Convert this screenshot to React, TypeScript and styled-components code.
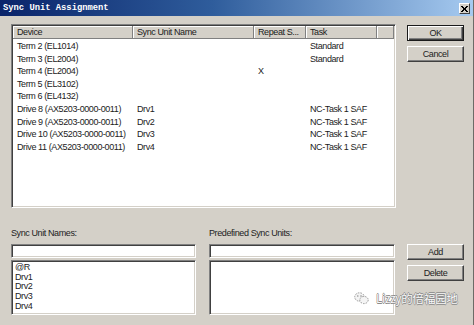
import React from 'react';
import styled, { createGlobalStyle } from 'styled-components';

const GlobalStyle = createGlobalStyle`
  html, body {
    margin: 0;
    padding: 0;
    background: #d4d0c8;
  }
  * {
    box-sizing: border-box;
  }
`;

const FACE = '#d4d0c8';

const Window = styled.div`
  position: relative;
  width: 474px;
  height: 325px;
  background: ${FACE};
  display: flex;
  flex-direction: column;
  font-family: 'Liberation Sans', Arial, sans-serif;
  font-size: 9px;
  letter-spacing: -0.4px;
  color: #1a1a1a;
  overflow: hidden;
  border-right: 1px solid #6d6b66;
`;

const TitleBar = styled.div`
  height: 16px;
  flex: none;
  display: flex;
  align-items: center;
  justify-content: space-between;
  padding: 0 3px 0 3px;
  background: linear-gradient(to right, #0a246a 0%, #2f5d9c 45%, #a6caf0 100%);
`;

const TitleText = styled.span`
  font-family: 'Liberation Mono', 'Courier New', monospace;
  font-weight: bold;
  font-size: 8.8px;
  letter-spacing: 0;
  color: #ffffff;
`;

const CloseButton = styled.div`
  width: 11px;
  height: 11px;
  margin-top: 1px;
  background: ${FACE};
  border: 1px solid;
  border-color: #fff #404040 #404040 #fff;
  display: flex;
  align-items: center;
  justify-content: center;
`;

const Body = styled.div`
  flex: 1;
  display: grid;
  grid-template-columns: 385px 57px;
  grid-template-rows: 184px auto;
  column-gap: 11px;
  padding: 8px 0 0 11px;
`;

const Sunken = styled.div<{ $h: number }>`
  width: 100%;
  height: ${({ $h }) => $h}px;
  background: #ffffff;
  border: 1px solid;
  border-color: #808080 #ffffff #ffffff #808080;
  box-shadow: inset 1px 1px 0 #404040, inset -1px -1px 0 ${FACE};
  overflow: hidden;
`;

const Table = styled.div`
  display: grid;
  grid-template-columns: 120px 121px 52px 71px 1fr;
  padding: 1px 1px 0 1px;
`;

const HeaderCell = styled.div`
  height: 13px;
  line-height: 12px;
  padding-left: 4px;
  background: ${FACE};
  border-right: 1px solid #808080;
  border-bottom: 1px solid #808080;
  box-shadow: inset 1px 1px 0 #ffffff;
  white-space: nowrap;
  overflow: hidden;
`;

const Cell = styled.div<{ $thin?: boolean }>`
  height: 12.6px;
  line-height: 12.6px;
  padding-left: 4px;
  white-space: nowrap;
  overflow: hidden;
  color: #222;
  font-weight: ${({ $thin }) => ($thin ? 300 : 400)};
`;

const FirstRowGap = styled.div`
  grid-column: 1 / -1;
  height: 1px;
`;

const ButtonColumn = styled.div<{ $top: number }>`
  display: flex;
  flex-direction: column;
  gap: 5px;
  padding-top: ${({ $top }) => $top}px;
`;

const Button = styled.div<{ $default?: boolean }>`
  height: 16px;
  width: 57px;
  display: flex;
  align-items: center;
  justify-content: center;
  background: ${FACE};
  color: #222;
  border: 1px solid;
  border-color: ${({ $default }) =>
    $default ? '#1a1a1a' : '#ffffff #404040 #404040 #ffffff'};
  box-shadow: ${({ $default }) =>
    $default
      ? 'inset 1px 1px 0 #ffffff, inset -1px -1px 0 #404040, inset -2px -2px 0 #808080'
      : 'inset -1px -1px 0 #808080'};
`;

const Lower = styled.div`
  display: grid;
  grid-template-columns: 185px 186px;
  column-gap: 13px;
  padding-top: 19px;
`;

const Panel = styled.div`
  display: flex;
  flex-direction: column;
`;

const Label = styled.div`
  height: 12px;
  line-height: 12px;
  margin-bottom: 5px;
  color: #222;
`;

const InputBox = styled.div`
  margin-bottom: 2px;
`;

const ListItems = styled.div`
  padding: 2px 0 0 3px;
  line-height: 9.7px;
  color: #222;
`;

const Watermark = styled.div`
  position: absolute;
  left: 354px;
  top: 290px;
  display: flex;
  align-items: center;
  gap: 7px;
  font-family: 'Noto Sans CJK SC', 'Liberation Sans', sans-serif;
  font-size: 11.5px;
  letter-spacing: -0.2px;
  color: #fafafa;
  text-shadow: 0.6px 0 0 #8a8a8a, -0.6px 0 0 #8a8a8a, 0 0.6px 0 #8a8a8a, 0 -0.6px 0 #8a8a8a;
`;

const columns = ['Device', 'Sync Unit Name', 'Repeat S...', 'Task', ''];

const rows = [
  ['Term 2 (EL1014)', '', '', 'Standard'],
  ['Term 3 (EL2004)', '', '', 'Standard'],
  ['Term 4 (EL2004)', '', 'X', ''],
  ['Term 5 (EL3102)', '', '', ''],
  ['Term 6 (EL4132)', '', '', ''],
  ['Drive 8 (AX5203-0000-0011)', 'Drv1', '', 'NC-Task 1 SAF'],
  ['Drive 9 (AX5203-0000-0011)', 'Drv2', '', 'NC-Task 1 SAF'],
  ['Drive 10 (AX5203-0000-0011)', 'Drv3', '', 'NC-Task 1 SAF'],
  ['Drive 11 (AX5203-0000-0011)', 'Drv4', '', 'NC-Task 1 SAF'],
];

const unitNames = ['@R', 'Drv1', 'Drv2', 'Drv3', 'Drv4'];

const App: React.FC = () => (
  <>
    <GlobalStyle />
    <Window>
      <TitleBar>
        <TitleText>Sync Unit Assignment</TitleText>
        <CloseButton>
          <svg width="7" height="6" viewBox="0 0 7 6">
            <path d="M0 0 L6 6 M1 0 L7 6 M6 0 L0 6 M7 0 L1 6" stroke="#000" strokeWidth="1" />
          </svg>
        </CloseButton>
      </TitleBar>
      <Body>
        <Sunken $h={184}>
          <Table>
            {columns.map((c, i) => (
              <HeaderCell key={i}>{c}</HeaderCell>
            ))}
            <FirstRowGap />
            {rows.map((r) => (
              <React.Fragment key={r[0]}>
                <Cell>{r[0]}</Cell>
                <Cell>{r[1]}</Cell>
                <Cell $thin>{r[2]}</Cell>
                <Cell>{r[3]}</Cell>
                <Cell />
              </React.Fragment>
            ))}
          </Table>
        </Sunken>
        <ButtonColumn $top={1}>
          <Button $default>OK</Button>
          <Button>Cancel</Button>
        </ButtonColumn>
        <Lower>
          <Panel>
            <Label>Sync Unit Names:</Label>
            <InputBox>
              <Sunken $h={14} />
            </InputBox>
            <Sunken $h={55}>
              <ListItems>
                {unitNames.map((n) => (
                  <div key={n}>{n}</div>
                ))}
              </ListItems>
            </Sunken>
          </Panel>
          <Panel>
            <Label>Predefined Sync Units:</Label>
            <InputBox>
              <Sunken $h={14} />
            </InputBox>
            <Sunken $h={55} />
          </Panel>
        </Lower>
        <ButtonColumn $top={36}>
          <Button>Add</Button>
          <Button>Delete</Button>
        </ButtonColumn>
      </Body>
      <Watermark>
        <svg width="15" height="13" viewBox="0 0 15 13">
          <g fill="#f4f4f4" stroke="#8f8f8f" strokeWidth="0.9" strokeDasharray="1.6 1.1">
            <ellipse cx="5.5" cy="5" rx="4.8" ry="4.2" />
            <ellipse cx="10" cy="8" rx="4.2" ry="3.6" />
          </g>
          <circle cx="3.8" cy="4" r="0.8" fill="#8f8f8f" />
          <circle cx="7" cy="4" r="0.8" fill="#8f8f8f" />
        </svg>
        <span>Lizzy的倍福园地</span>
      </Watermark>
    </Window>
  </>
);

export default App;
